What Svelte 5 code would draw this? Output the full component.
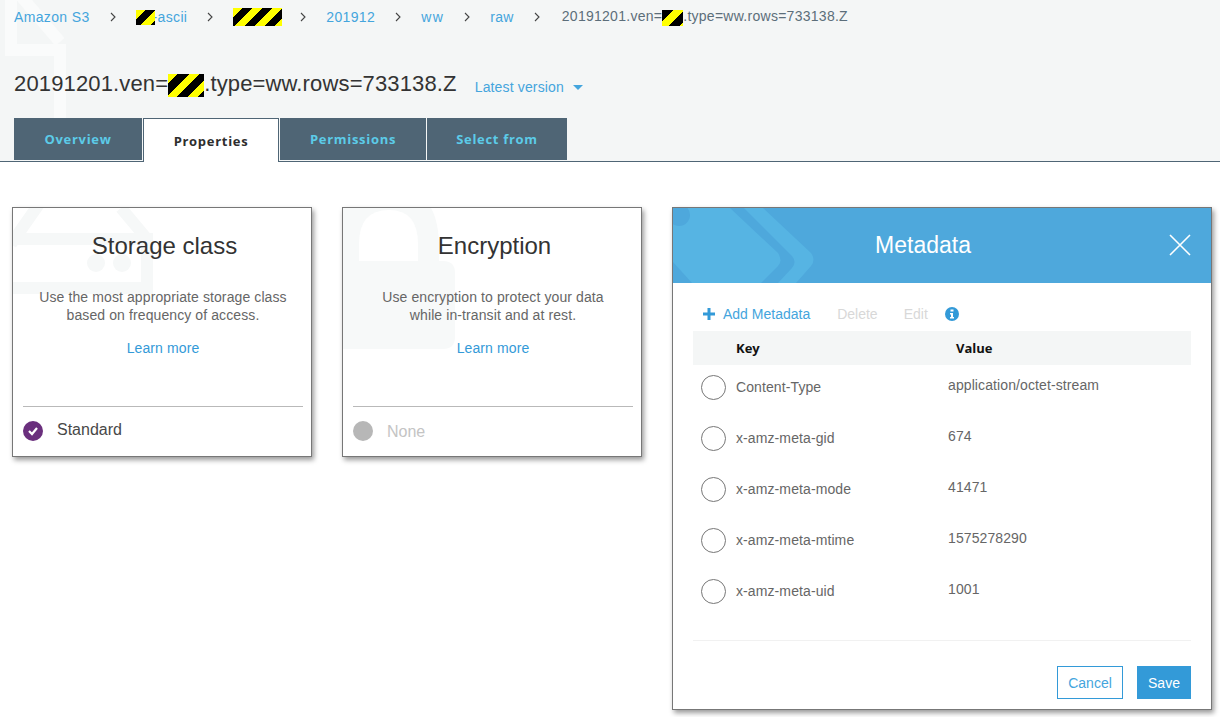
<script>
  const crumbs = [
    { text: 'Amazon S3' },
    { text: '-ascii', mask: 'sm' },
    { mask: 'lg' },
    { text: '201912' },
    { text: 'ww', wide: true },
    { text: 'raw' }
  ];
  const tabs = ['Overview', 'Properties', 'Permissions', 'Select from'];
  const rows = [
    ['Content-Type', 'application/octet-stream'],
    ['x-amz-meta-gid', '674'],
    ['x-amz-meta-mode', '41471'],
    ['x-amz-meta-mtime', '1575278290'],
    ['x-amz-meta-uid', '1001']
  ];
</script>

<div class="page">
  <header class="head">
    <svg class="head-mark" width="80" height="120" viewBox="0 0 80 120" fill="none">
      <path d="M11 0V50H60V118M20 -5L60 42" stroke="#fafbfb" stroke-width="12" />
    </svg>
    <nav class="crumbs">
      {#each crumbs as c}
        <span class="crumb" class:wide={c.wide}>
          {#if c.mask}<i class="mask {c.mask}"></i>{/if}{#if c.text}{c.text}{/if}
        </span>
        <svg class="chev" width="6" height="10" viewBox="0 0 6 10" fill="none"><path d="M1 1l4 4-4 4" stroke="#444" stroke-width="1.1" /></svg>
      {/each}
      <span class="current">20191201.ven=<i class="mask cur"></i>.type=ww.rows=733138.Z</span>
    </nav>
    <div class="title-row">
      <h1>20191201.ven=<i class="mask ttl"></i>.type=ww.rows=733138.Z</h1>
      <span class="version">Latest version</span>
      <i class="caret"></i>
    </div>
    <div class="tabs">
      {#each tabs as t, i}
        <div class="tab" class:active={i === 1}>{t}</div>
      {/each}
    </div>
  </header>

  <main class="main">
    <section class="card">
      <svg class="card-mark" width="160" height="95" viewBox="0 0 160 95" fill="none">
        <path d="M0 31H134V80H0M108 0L134 31M-2 36L26 -4" stroke="#f6f8f8" stroke-width="12" />
        <circle cx="83" cy="55" r="9" fill="#f6f8f8" /><circle cx="109" cy="55" r="9" fill="#f6f8f8" />
      </svg>
      <h2>Storage class</h2>
      <p>Use the most appropriate storage class<br />based on frequency of access.</p>
      <a class="learn" href="#top">Learn more</a>
      <div class="status">
        <span class="dot on">
          <svg width="12" height="10" viewBox="0 0 12 10" fill="none"><path d="M2 5l3 3 5-6" stroke="#fff" stroke-width="2.2" /></svg>
        </span>
        <span class="status-text">Standard</span>
      </div>
    </section>

    <section class="card">
      <svg class="card-mark" width="112" height="141" viewBox="0 0 112 141" fill="none">
        <path d="M0 0H88Q96 14 96 40V53H100Q112 53 112 65V129Q112 141 100 141H0Z" fill="#f7f9f9" />
        <path d="M16 53V36Q16 2 46 2Q75 2 75 36V53Z" fill="#fff" />
      </svg>
      <h2>Encryption</h2>
      <p>Use encryption to protect your data<br />while in-transit and at rest.</p>
      <a class="learn" href="#top">Learn more</a>
      <div class="status off">
        <span class="dot"></span>
        <span class="none-text">None</span>
      </div>
    </section>

    <section class="panel">
      <div class="panel-head">
        <svg class="panel-mark" width="150" height="76" viewBox="0 0 150 76">
          <path d="M0 0H57L105 45Q110 53 105 58L88 75H19L0 54Z" fill="#56b4e3" />
          <path d="M71 0H90L138 45Q143 52 138 58L123 75H105L119 60Q124 54 119 48Z" fill="#56b4e3" />
          <circle cx="6" cy="7" r="11" fill="#4ea8dc" />
        </svg>
        <h2>Metadata</h2>
        <svg class="close" width="22" height="22" viewBox="0 0 22 22" fill="none"><path d="M1 1l20 20M21 1L1 21" stroke="#fff" stroke-width="1.6" /></svg>
      </div>
      <div class="panel-body">
        <div class="toolbar">
          <svg width="12" height="12" viewBox="0 0 12 12"><path d="M0 6h12M6 0v12" stroke="#339ad8" stroke-width="3" /></svg>
          <span class="add">Add Metadata</span>
          <span class="dis del">Delete</span>
          <span class="dis">Edit</span>
          <svg class="info" width="14" height="14" viewBox="0 0 14 14">
            <circle cx="7" cy="7" r="7" fill="#339ad8" />
            <path d="M5.500 2.500h3v2h-3zM5 6h3v4h1v1.500H5V10h1V7.500H5z" fill="#fff" />
          </svg>
        </div>
        <div class="thead"><span class="k">Key</span><span>Value</span></div>
        <div class="rows">
          {#each rows as r}
            <div class="row">
              <span class="radio"></span>
              <span class="key">{r[0]}</span>
              <span class="val">{r[1]}</span>
            </div>
          {/each}
        </div>
        <div class="foot">
          <button class="btn cancel">Cancel</button>
          <button class="btn save">Save</button>
        </div>
      </div>
    </section>
  </main>
</div>

<style>
:global(body) {
  margin: 0;
  background: #fff;
}

.page {
  width: 1220px;
  height: 717px;
  overflow: hidden;
  font-family: "Liberation Sans", Arial, sans-serif;
}

.head {
  position: relative;
  display: flex;
  flex-direction: column;
  height: 160px;
  padding: 0 0 1px 14px;
  background: #f4f6f6;
  border-bottom: 1px solid #4f6575;
}

.head-mark {
  position: absolute;
  left: 0;
  top: 0;
}

.crumbs {
  position: relative;
  display: flex;
  align-items: center;
  height: 34px;
  font-size: 14px;
  letter-spacing: 0.35px;
  color: #44a5dd;
  gap: 20px;
}

.crumb {
  display: inline-flex;
  align-items: center;
  white-space: nowrap;
}

.crumb.wide {
  letter-spacing: 1.4px;
}

.chev {
  flex: none;
}

.current {
  margin-left: 2px;
  color: #5c6e7a;
  white-space: nowrap;
  letter-spacing: 0.27px;
}

.mask {
  position: relative;
  display: inline-block;
  vertical-align: middle;
  background: repeating-linear-gradient(135deg, #ff0 0 7px, #000 7px 14px);
}

.mask.sm {
  width: 19px;
  height: 15px;
  margin-right: -2px;
}

.mask.lg {
  width: 49px;
  height: 18px;
  margin-right: -2px;
}

.mask.cur {
  width: 21px;
  height: 16px;
  background: repeating-linear-gradient(135deg, #000 0 8px, #ff0 8px 16px);
}

.mask.ttl {
  width: 36px;
  height: 23px;
  background: repeating-linear-gradient(135deg, #ff0 0 7px, #000 7px 15px);
}

.title-row {
  position: relative;
  display: flex;
  align-items: center;
  height: 38px;
  margin-top: 31px;
}

h1 {
  margin: 0;
  font-weight: 400;
  font-size: 22px;
  letter-spacing: 0.14px;
  color: #333;
  white-space: nowrap;
}

.version {
  margin-left: 18px;
  font-size: 14px;
  letter-spacing: 0.15px;
  color: #44a5dd;
  position: relative;
  top: 3px;
}

.caret {
  margin-left: 9px;
  position: relative;
  top: 3px;
  border-left: 5px solid transparent;
  border-right: 5px solid transparent;
  border-top: 5px solid #44a5dd;
}

.tabs {
  position: relative;
  margin-top: auto;
  display: flex;
  gap: 1px;
}

.tab {
  height: 42px;
  display: flex;
  align-items: center;
  justify-content: center;
  background: #4f6575;
  color: #5ccbe8;
  font-family: "Open Sans", sans-serif;
  font-weight: 700;
  font-size: 13px;
  letter-spacing: 0.7px;
  width: 128px;
}

.tab:nth-child(3) {
  width: 146px;
}

.tab:nth-child(4) {
  width: 140px;
}

.tab.active {
  position: relative;
  height: 44px;
  margin-bottom: -2px;
  background: #fff;
  color: #2e2e2e;
  border: 1px solid #4f6575;
  border-bottom: none;
  box-sizing: border-box;
  width: 136px;
}

.main {
  display: flex;
  align-items: flex-start;
  gap: 30px;
  padding: 45px 8px 0 12px;
}

.card {
  position: relative;
  width: 300px;
  height: 250px;
  box-sizing: border-box;
  background: #fff;
  border: 1px solid #777;
  box-shadow: 2px 3px 5px rgba(0, 0, 0, 0.4);
  text-align: center;
  overflow: hidden;
  display: flex;
  flex-direction: column;
  padding: 0 8px 0 10px;
}

.card > * {
  position: relative;
}

.card > .card-mark {
  position: absolute;
  left: 0;
  top: 0;
}

.card h2 {
  margin: 23px 0 0 3px;
  font-weight: 400;
  font-size: 24px;
  line-height: 30px;
  color: #333;
}

.card p {
  margin: 27px 0 0;
  font-size: 14px;
  line-height: 18px;
  color: #666;
  letter-spacing: 0.1px;
}

.learn {
  margin-top: 15px;
  font-size: 14px;
  line-height: 18px;
  letter-spacing: 0.1px;
  color: #339ad8;
  text-decoration: none;
}

.status {
  margin-top: auto;
  height: 47px;
  padding-bottom: 2px;
  border-top: 1px solid #b9b9b9;
  display: flex;
  align-items: center;
  gap: 14px;
  font-size: 16px;
  color: #484848;
  text-align: left;
}

.status-text {
  position: relative;
  top: -1px;
}

.none-text {
  position: relative;
  top: 1px;
}

.status.off {
  color: #c4c4c4;
}

.dot {
  width: 20px;
  height: 20px;
  border-radius: 50%;
  background: #b7b7b7;
  display: flex;
  align-items: center;
  justify-content: center;
}

.dot.on {
  background: #6a2f7d;
}

.panel {
  width: 540px;
  height: 503px;
  box-sizing: border-box;
  background: #fff;
  border: 1px solid #777;
  box-shadow: 2px 3px 5px rgba(0, 0, 0, 0.4);
}

.panel-head {
  position: relative;
  height: 75px;
  padding-right: 38px;
  background: #4ea8dc;
  display: flex;
  align-items: center;
  justify-content: center;
  overflow: hidden;
}

.panel-mark {
  position: absolute;
  left: 0;
  top: 0;
}

.panel-head h2 {
  position: relative;
  margin: 0;
  font-weight: 400;
  font-size: 23px;
  color: #fff;
}

.close {
  position: absolute;
  right: 20px;
  top: 26px;
}

.panel-body {
  padding: 0 20px;
}

.toolbar {
  display: flex;
  align-items: center;
  height: 34px;
  padding: 14px 0 0 10px;
  font-size: 14px;
}

.add {
  margin-left: 8px;
  color: #44a5dd;
}

.dis {
  color: #d8d8d8;
}

.del {
  margin: 0 26px 0 27px;
}

.info {
  margin-left: 17px;
}

.thead {
  display: flex;
  align-items: center;
  height: 34px;
  background: #f4f6f6;
  font-family: "Open Sans", sans-serif;
  font-weight: 700;
  font-size: 13px;
  color: #111;
}

.thead .k {
  width: 263px;
  padding-left: 43px;
  box-sizing: border-box;
}

.rows {
  height: 278px;
  margin-top: -3px;
  border-bottom: 1px solid #f1f1f1;
}

.row {
  position: relative;
  display: flex;
  align-items: center;
  height: 51px;
  font-size: 14px;
  color: #666;
  letter-spacing: 0.1px;
}

.radio {
  width: 23px;
  height: 23px;
  margin-left: 8px;
  border: 1px solid #777;
  border-radius: 50%;
  flex: none;
}

.key {
  position: relative;
  top: -1px;
  width: 212px;
  margin-left: 10px;
}

.val {
  position: relative;
  top: -3px;
}

.foot {
  display: flex;
  justify-content: flex-end;
  gap: 14px;
  padding-top: 25px;
}

.btn {
  height: 33px;
  font-family: "Liberation Sans", sans-serif;
  font-size: 14px;
  padding: 0;
  border-radius: 0;
}

.cancel {
  width: 66px;
  background: #fff;
  border: 1px solid #339ad8;
  color: #44a5dd;
}

.save {
  width: 54px;
  background: #339ad8;
  border: none;
  color: #fff;
}
</style>
